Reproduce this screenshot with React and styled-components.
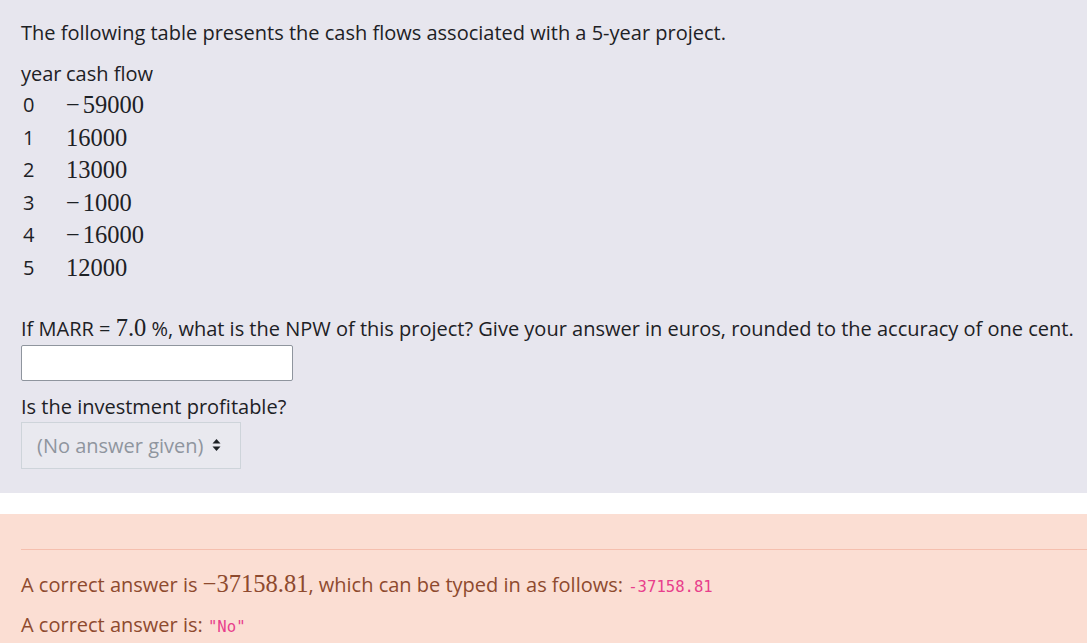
import React from 'react';
import styled, { createGlobalStyle } from 'styled-components';

const GlobalStyle = createGlobalStyle`
  html, body { margin: 0; padding: 0; background: #fff; }
  body {
    font-family: "Open Sans", "Noto Sans", sans-serif;
    font-size: 20px;
    color: #1d2125;
    overflow: hidden;
  }
`;

const Formulation = styled.section`
  background: #e7e6ee;
  padding: 18px 21px 24px;
`;

const Para = styled.p`
  margin: 0 0 ${p => p.$mb || 0}px;
  line-height: 30px;
  height: 30px;
  white-space: nowrap;
`;

const MathText = styled.span`
  font-family: "Liberation Serif", "DejaVu Serif", serif;
  font-size: 24.5px;
  line-height: 1;
`;

const Table = styled.div`
  display: grid;
  grid-template-columns: 45px auto;
  justify-content: start;
  margin: 11px 0 29px;
`;

const Head = styled.div`
  height: 30px;
  line-height: 30px;
`;

const YearCell = styled.div`
  height: 32.6px;
  line-height: 32.6px;
  padding-left: 2px;
`;

const FlowCell = styled.div`
  height: 32.6px;
  line-height: 32.6px;
  font-family: "Liberation Serif", "DejaVu Serif", serif;
  font-size: 24.5px;
`;

const Minus = styled.span`
  margin-right: 3px;
`;

const AnswerInput = styled.input`
  display: block;
  box-sizing: border-box;
  width: 272px;
  height: 36px;
  margin: 1px 0 11px;
  border: 1px solid #8f959e;
  border-radius: 2px;
  background: #fff;
`;

const Select = styled.div`
  box-sizing: border-box;
  display: inline-flex;
  align-items: center;
  gap: 9px;
  height: 47px;
  padding: 0 19px 0 15px;
  border: 1px solid #ced4da;
  background: #e9e9ef;
  color: #8f959e;
`;

const Feedback = styled.section`
  margin-top: 21px;
  background: #fbded3;
  color: #8e4a2e;
  padding: 35px 0 10px 21px;
`;

const Rule = styled.hr`
  border: 0;
  border-top: 1px solid #f5bfae;
  margin: 0 0 20px;
`;

const Code = styled.code`
  font-family: "DejaVu Sans Mono", "Liberation Mono", monospace;
  font-size: 15.6px;
  color: #e83e8c;
`;

const flows = [-59000, 16000, 13000, -1000, -16000, 12000];

export default function App() {
  return (
    <>
      <GlobalStyle />
      <Formulation>
        <Para>The following table presents the cash flows associated with a 5-year project.</Para>
        <Table>
          <Head>year</Head>
          <Head>cash flow</Head>
          {flows.map((v, i) => (
            <React.Fragment key={i}>
              <YearCell>{i}</YearCell>
              <FlowCell>{v < 0 && <Minus>−</Minus>}{Math.abs(v)}</FlowCell>
            </React.Fragment>
          ))}
        </Table>
        <Para>If MARR = <MathText>7.0</MathText> %, what is the NPW of this project? Give your answer in euros, rounded to the accuracy of one cent.</Para>
        <AnswerInput type="text" />
        <Para>Is the investment profitable?</Para>
        <Select>
          (No answer given)
          <svg width="9" height="14" viewBox="0 0 9 14">
            <path d="M4.5 1 L8.5 5.5 L0.5 5.5 Z" fill="#1d2125" />
            <path d="M4.5 13 L8.5 8.5 L0.5 8.5 Z" fill="#1d2125" />
          </svg>
        </Select>
      </Formulation>
      <Feedback>
        <Rule />
        <Para $mb={10}>A correct answer is <MathText>−37158.81</MathText>, which can be typed in as follows: <Code>-37158.81</Code></Para>
        <Para>A correct answer is: <Code>"No"</Code></Para>
      </Feedback>
    </>
  );
}
